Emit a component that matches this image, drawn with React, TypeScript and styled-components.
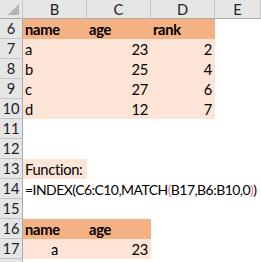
import React from 'react';
import styled, { createGlobalStyle } from 'styled-components';

const GlobalStyle = createGlobalStyle`
  html, body { margin: 0; padding: 0; background: #ffffff; }
  body { font-family: Lato, "Liberation Sans", sans-serif; }
`;

const Sheet = styled.div`
  display: grid;
  grid-template-columns: 23px 64px 64px 64px 1fr;
  grid-auto-rows: 20px;
  grid-template-rows: 19px;
  width: 261px;
  height: 262px;
  overflow: hidden;
  font-size: 14.7px;
  color: #000;
`;

const Corner = styled.div`
  background: #e6e6e6;
  border-right: 1px solid #c6c6c6;
  border-bottom: 1px solid #ababab;
  box-sizing: border-box;
  display: flex;
  align-items: flex-end;
  justify-content: flex-end;
  padding: 0 3px 3px 0;
`;

const ColHead = styled.div`
  background: #e6e6e6;
  border-right: 1px solid #c6c6c6;
  border-bottom: 1px solid #ababab;
  box-sizing: border-box;
  display: flex;
  align-items: center;
  justify-content: center;
  color: #222;
`;

const RowHead = styled.div`
  background: #e6e6e6;
  border-right: 1px solid #ababab;
  border-bottom: 1px solid #c6c6c6;
  box-sizing: border-box;
  display: flex;
  align-items: flex-end;
  justify-content: center;
  padding-bottom: 1px;
  color: #222;
`;

type Fill = 'head' | 'body' | 'none';

const Cell = styled.div<{ $fill: Fill; $align?: 'left' | 'right' | 'center'; $bold?: boolean }>`
  background: ${(p) => (p.$fill === 'head' ? '#f4b183' : p.$fill === 'body' ? '#fce4d6' : 'transparent')};
  display: flex;
  align-items: flex-end;
  justify-content: ${(p) => (p.$align === 'right' ? 'flex-end' : p.$align === 'center' ? 'center' : 'flex-start')};
  padding: 0 3px 1px 2px;
  font-weight: ${(p) => (p.$bold ? 700 : 400)};
  letter-spacing: -0.3px;
  white-space: nowrap;
  overflow: visible;
  min-width: 0;
`;

const Formula = styled.span`
  white-space: nowrap;
  position: relative;
  z-index: 2;
  font-size: 14px;
  letter-spacing: -0.55px;
`;

const Paren = styled.span`
  color: #e8739c;
`;

type CellDef = { text?: string; fill: Fill; align?: 'left' | 'right' | 'center'; bold?: boolean };

const blank: CellDef[] = [{ fill: 'none' }, { fill: 'none' }, { fill: 'none' }, { fill: 'none' }];

const rows: { num: number; cells: CellDef[] }[] = [
  { num: 6, cells: [
    { text: 'name', fill: 'head', bold: true },
    { text: 'age', fill: 'head', bold: true },
    { text: 'rank', fill: 'head', bold: true },
    { fill: 'none' },
  ] },
  ...[['a', '23', '2'], ['b', '25', '4'], ['c', '27', '6'], ['d', '12', '7']].map((r, i) => ({
    num: 7 + i,
    cells: [
      { text: r[0], fill: 'body' as Fill },
      { text: r[1], fill: 'body' as Fill, align: 'right' as const },
      { text: r[2], fill: 'body' as Fill, align: 'right' as const },
      { fill: 'none' as Fill },
    ],
  })),
  { num: 11, cells: blank },
  { num: 12, cells: blank },
  { num: 13, cells: [{ text: 'Function:', fill: 'body' }, { fill: 'none' }, { fill: 'none' }, { fill: 'none' }] },
];

const Triangle = () => (
  <svg width="11" height="11" viewBox="0 0 11 11">
    <polygon points="11,0 11,11 0,11" fill="#b4b4b4" />
  </svg>
);

export default function App() {
  return (
    <>
      <GlobalStyle />
      <Sheet>
        <Corner><Triangle /></Corner>
        <ColHead>B</ColHead>
        <ColHead>C</ColHead>
        <ColHead>D</ColHead>
        <ColHead>E</ColHead>

        {rows.map((r) => (
          <React.Fragment key={r.num}>
            <RowHead>{r.num}</RowHead>
            {r.cells.map((c, i) => (
              <Cell key={i} $fill={c.fill} $align={c.align} $bold={c.bold}>{c.text}</Cell>
            ))}
          </React.Fragment>
        ))}

        <RowHead>14</RowHead>
        <Cell $fill="none">
          <Formula>
            =INDEX(C6:C10,MATCH<Paren>(</Paren>B17,B6:B10,0<Paren>)</Paren>)
          </Formula>
        </Cell>
        <Cell $fill="none" />
        <Cell $fill="none" />
        <Cell $fill="none" />

        <RowHead>15</RowHead>
        <Cell $fill="none" />
        <Cell $fill="none" />
        <Cell $fill="none" />
        <Cell $fill="none" />

        <RowHead>16</RowHead>
        <Cell $fill="head" $bold>name</Cell>
        <Cell $fill="head" $bold>age</Cell>
        <Cell $fill="none" />
        <Cell $fill="none" />

        <RowHead>17</RowHead>
        <Cell $fill="body" $align="center">a</Cell>
        <Cell $fill="body" $align="right">23</Cell>
        <Cell $fill="none" />
        <Cell $fill="none" />

        <RowHead />
      </Sheet>
    </>
  );
}
